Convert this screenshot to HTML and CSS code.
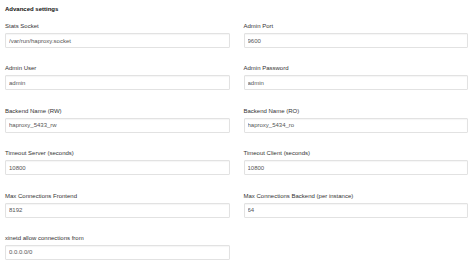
FILE: index.html
```html
<!DOCTYPE html>
<html>
<head>
<meta charset="utf-8">
<link rel="stylesheet" href="styles.css">
</head>
<body>
<div class="panel">
  <div class="title">Advanced settings</div>
  <div class="grid">
    <div class="field"><label class="label">Stats Socket</label><input class="input" type="text" value="/var/run/haproxy.socket"></div>
    <div class="field"><label class="label">Admin Port</label><input class="input" type="text" value="9600"></div>
    <div class="field"><label class="label">Admin User</label><input class="input" type="text" value="admin"></div>
    <div class="field"><label class="label">Admin Password</label><input class="input" type="text" value="admin"></div>
    <div class="field"><label class="label">Backend Name (RW)</label><input class="input" type="text" value="haproxy_5433_rw"></div>
    <div class="field"><label class="label">Backend Name (RO)</label><input class="input" type="text" value="haproxy_5434_ro"></div>
    <div class="field"><label class="label">Timeout Server (seconds)</label><input class="input" type="text" value="10800"></div>
    <div class="field"><label class="label">Timeout Client (seconds)</label><input class="input" type="text" value="10800"></div>
    <div class="field"><label class="label">Max Connections Frontend</label><input class="input" type="text" value="8192"></div>
    <div class="field"><label class="label">Max Connections Backend (per instance)</label><input class="input" type="text" value="64"></div>
    <div class="field"><label class="label">xinetd allow connections from</label><input class="input" type="text" value="0.0.0.0/0"></div>
  </div>
</div>
</body>
</html>
```
FILE: styles.css
```css
html, body {
  margin: 0;
  padding: 0;
  background: #ffffff;
}
body {
  font-family: "Liberation Sans", Arial, Helvetica, sans-serif;
  color: #333333;
}
.panel {
  padding: 6px 6px 0 5px;
}
.title {
  font-size: 6px;
  line-height: 7px;
  font-weight: bold;
  color: #111111;
  margin-bottom: 10px;
}
.grid {
  display: grid;
  grid-template-columns: 1fr 1fr;
  column-gap: 14px;
  row-gap: 17.4px;
}
.field {
  display: flex;
  flex-direction: column;
}
.label {
  display: block;
  font-size: 6px;
  line-height: 7px;
  color: #333333;
  margin-bottom: 3px;
  padding-left: 0;
}
.input {
  box-sizing: border-box;
  width: 100%;
  height: 15px;
  margin: 0;
  padding: 0 3px;
  font-family: "Liberation Sans", Arial, Helvetica, sans-serif;
  font-size: 6px;
  color: #555555;
  background: #ffffff;
  border: 1px solid #e2e2e2;
  border-radius: 1px;
  box-shadow: inset 0 1px 1px rgba(0, 0, 0, 0.04);
  outline: none;
}
```
